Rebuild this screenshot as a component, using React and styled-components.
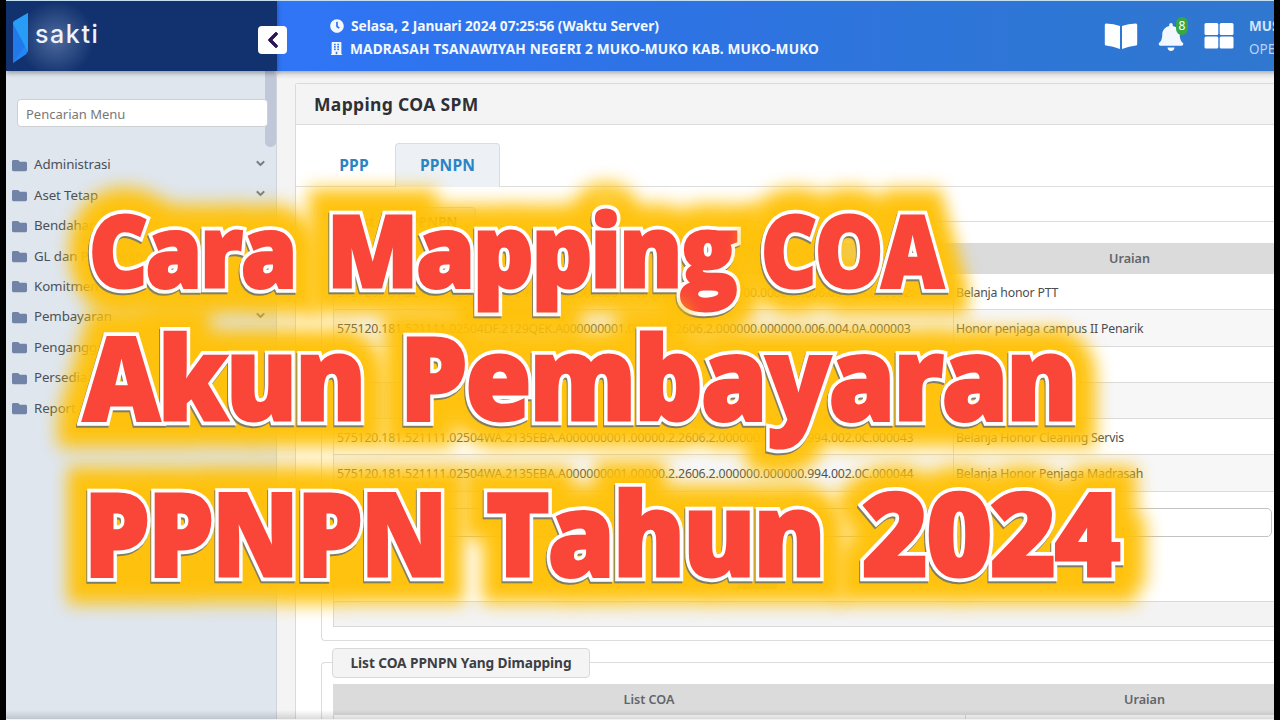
import React, { useLayoutEffect, useRef, useState } from "react";
import styled, { createGlobalStyle } from "styled-components";
import { FaClock, FaBuilding, FaBell, FaFolder, FaChevronDown, FaChevronLeft } from "react-icons/fa";

const Global = createGlobalStyle`
  * { box-sizing: border-box; }
  html, body { margin: 0; background: #000; overflow: hidden; }
  body { font-family: "Noto Sans", "Open Sans", sans-serif; color: #444; }
`;

const Frame = styled.div`
  position: relative;
  width: 1280px;
  height: 720px;
  padding: 0 6px;
  background: #000;
  overflow: hidden;
`;
const Screen = styled.div`
  display: flex;
  height: 719px;
  border-top: 1px solid #c4def2;
  background: #f4f4f4;
  overflow: hidden;
`;
const Sidebar = styled.aside`
  flex: none;
  width: 271px;
  display: flex;
  flex-direction: column;
  background: #dfe6ee;
  border-right: 1px solid #cfd4da;
`;
const Brand = styled.div`
  position: relative;
  z-index: 2;
  flex: none;
  display: flex;
  align-items: flex-start;
  width: 271px;
  height: 70px;
  padding: 11px 0 0 6px;
  background: radial-gradient(circle at 50px 38px, rgba(150, 175, 215, 0.45), rgba(150, 175, 215, 0) 38px), #12326f;
  box-shadow: 0 2px 5px rgba(0, 0, 0, 0.35);
`;
const BrandName = styled.span`
  margin: 4px 0 0 7px;
  font: 500 25px/36px Inter, sans-serif;
  letter-spacing: 1.6px;
  color: #eef3fb;
`;
const Toggle = styled.button`
  position: absolute;
  left: 252px;
  top: 25px;
  width: 29px;
  height: 28px;
  padding: 0;
  display: grid;
  place-items: center;
  border: 0;
  border-radius: 4px;
  background: #fff;
  color: #2d1557;
  svg { stroke: currentColor; stroke-width: 25px; }
`;
const SideBody = styled.div`
  position: relative;
  flex: 1;
  padding: 28px 9px 0 11px;
`;
const SideScroll = styled.div`
  position: absolute;
  right: 0;
  top: 0;
  width: 11px;
  height: 76px;
  border-radius: 0 0 5px 5px;
  background: #bfc7d9;
`;
const Search = styled.div`
  position: relative;
  width: 251px;
  height: 28px;
  padding-left: 8px;
  border: 1px solid #cdd0d3;
  border-radius: 4px;
  background: #fff;
  font-size: 13px;
  line-height: 28px;
  color: #777;
`;
const Menu = styled.ul`
  list-style: none;
  margin: 22px 0 0 -5px;
  padding: 0;
`;
const MenuItem = styled.li`
  display: flex;
  align-items: center;
  height: 30.45px;
  font-size: 13.3px;
  letter-spacing: -0.1px;
  color: #4b5058;
  svg:first-child { color: #7184a8; margin: 2px 7px 0 0; }
  span { flex: 1; }
  svg:last-child:not(:first-child) {
    color: #6d7681;
    margin: -2px 2px 0 0;
    stroke: currentColor;
    stroke-width: 40px;
  }
`;
const Main = styled.main`
  flex: 1;
  min-width: 0;
  display: flex;
  flex-direction: column;
`;
const TopBar = styled.header`
  flex: none;
  display: flex;
  align-items: flex-start;
  width: 997px;
  height: 70px;
  padding: 13px 0 0 53px;
  overflow: hidden;
  background: linear-gradient(90deg, #2f75f6, #2e73e4 40%, #2e76d6 75%, #3077cf);
  color: #f3f8ff;
`;
const BarShadow = styled.div`
  flex: none;
  height: 12px;
  background: linear-gradient(#b4b4b4, #e3e3e3 4px, #f4f4f4 8px);
`;
const Info = styled.div`
  flex: none;
  width: 774px;
`;
const InfoLine = styled.div`
  display: flex;
  align-items: center;
  gap: 7px;
  height: 23px;
  font-weight: 700;
  font-size: 13.7px;
  letter-spacing: ${(p) => p.$ls}px;
  white-space: nowrap;
`;
const Actions = styled.div`
  flex: none;
  display: flex;
  align-items: center;
  gap: 20px;
  height: 44px;
`;
const BellWrap = styled.div`
  position: relative;
  display: flex;
  width: 26px;
  margin-top: 1px;
`;
const Badge = styled.span`
  position: absolute;
  left: 18px;
  top: -6px;
  width: 12px;
  height: 18px;
  border-radius: 6px;
  background: #35a744;
  font: 12px/18px "Noto Sans", sans-serif;
  text-align: center;
  color: #fff;
`;
const User = styled.div`
  margin-left: -5px;
  margin-top: 4px;
  font-size: 13.5px;
  line-height: 23px;
  color: #b9d2f5;
  white-space: nowrap;
  b { display: block; color: #d3e3fa; font-weight: 700; }
`;
const Panel = styled.section`
  flex: 1;
  margin-left: 18px;
  border: 1px solid #dadada;
  border-width: 1px 0 0 1px;
  background: #fff;
  border-top-left-radius: 3px;
`;
const PanelTitle = styled.h1`
  margin: 0;
  height: 41px;
  padding-left: 18px;
  border-bottom: 1px solid #dcdcdc;
  background: #f4f4f4;
  font-size: 17.5px;
  font-weight: 700;
  letter-spacing: 0.35px;
  line-height: 41px;
  color: #2d3035;
`;
const Tabs = styled.nav`
  display: flex;
  height: 62px;
  padding: 18px 0 0 17px;
  border-bottom: 1px solid #dcdee0;
`;
const Tab = styled.div`
  width: ${(p) => p.$w}px;
  height: 44px;
  border: 1px solid ${(p) => (p.$on ? "#d9dde2" : "transparent")};
  border-bottom: 0;
  border-radius: 4px 4px 0 0;
  background: ${(p) => (p.$on ? "#edf1f5" : "transparent")};
  text-align: center;
  font-weight: 700;
  font-size: 15.6px;
  line-height: 43px;
  letter-spacing: 0.1px;
  color: #2a84c4;
`;
const Fieldset = styled.div`
  margin: ${(p) => p.$top}px 0 0 25px;
  height: ${(p) => p.$h}px;
  border: 1px solid #dcdcdc;
  border-right: 0;
  border-radius: 4px 0 0 4px;
  padding-left: 11px;
`;
const Legend = styled.div`
  width: ${(p) => p.$w}px;
  height: 30px;
  margin: -15px 0 6px -1px;
  border: 1px solid #d9d9d9;
  border-radius: 4px;
  background: #f4f4f4;
  text-align: center;
  font-weight: 700;
  font-size: 13.7px;
  line-height: 27px;
  letter-spacing: -0.08px;
  color: #3c3f44;
`;
const Row = styled.div`
  display: grid;
  grid-template-columns: ${(p) => p.$split || 620}px 1fr;
  height: 36.3px;
  border-bottom: 1px solid #dbdbdb;
  background: ${(p) => (p.$alt ? "#f7f7f8" : "#fff")};
`;
const HeadRow = styled(Row)`
  height: 31px;
  background: #dbdbdb;
`;
const Cell = styled.div`
  padding-left: ${(p) => p.$pad ?? 3}px;
  border-left: 1px solid #dddddd;
  font-size: 12.3px;
  letter-spacing: ${(p) => p.$ls || 0}px;
  line-height: 37px;
  white-space: nowrap;
  color: #4a4d52;
`;
const HeadCell = styled.div`
  padding-left: ${(p) => p.$pl || 0}px;
  text-align: center;
  font-weight: 600;
  font-size: 12.6px;
  line-height: 31px;
  color: #626569;
`;
const InputRow = styled.div`
  display: flex;
  gap: 6px;
  height: 109px;
  padding: 16px 2px 0 4px;
  border-left: 1px solid #dddddd;
`;
const Field = styled.div`
  flex: ${(p) => p.$flex};
  height: 29px;
  border: 1px solid #c3c3c3;
  border-radius: 5px;
  background: #fff;
`;
const Scroller = styled.div`
  width: 40px;
  height: 6px;
  margin: -18px 0 12px 404px;
  background: #aaa;
`;
const TableFoot = styled.div`
  height: 26px;
  border: 1px solid #d9d9d9;
  border-right: 0;
  background: #f3f3f3;
`;
const BottomShade = styled.div`
  position: absolute;
  left: 6px;
  right: 6px;
  bottom: 1px;
  height: 9px;
  background: linear-gradient(rgba(0, 0, 0, 0), rgba(0, 0, 0, 0.14));
`;
const BottomEdge = styled.div`
  height: 1px;
  background: #f2f2f2;
`;

const Headline = styled.div`
  position: absolute;
  inset: 0;
`;
const Word = styled.span`
  position: absolute;
  display: block;
  font-family: "Open Sans", "Noto Sans", sans-serif;
  font-weight: 800;
  font-size: ${(p) => p.$size}px;
  line-height: 1;
  letter-spacing: -2px;
  white-space: pre;
  left: ${(p) => p.$x}px;
  top: ${(p) => p.$base - p.$size * 0.888}px;
  transform-origin: 0 0;
  stroke-linejoin: round;
  &::before {
    content: attr(data-text);
    position: absolute;
    left: 0;
    top: 0;
    color: #ffc107;
    -webkit-text-stroke: 54px #ffc107;
    filter: blur(9px);
    opacity: 0.97;
  }
`;
const Face = styled.span`
  position: relative;
  display: block;
  color: #fff;
  -webkit-text-stroke: 10.5px #fff;
  paint-order: stroke fill;
  filter: drop-shadow(-0.5px 2px 0.6px #7f7d66);
  &::after {
    content: attr(data-text);
    position: absolute;
    left: 0;
    top: 0;
    color: #f94639;
    -webkit-text-stroke: 3px #f94639;
  }
`;

function FittedWord({ text, x, width, base, size }) {
  const ref = useRef(null);
  const [scale, setScale] = useState(1);
  useLayoutEffect(() => {
    setScale(width / ref.current.offsetWidth);
  }, [width]);
  return (
    <Word ref={ref} data-text={text} $x={x} $base={base} $size={size} style={{ transform: `scaleX(${scale})` }}>
      <Face data-text={text}>{text}</Face>
    </Word>
  );
}

const words = [
  { text: "Cara", x: 89, width: 206, base: 287, size: 100 },
  { text: "Mapping", x: 327, width: 409, base: 287, size: 100 },
  { text: "COA", x: 761, width: 181, base: 287, size: 100 },
  { text: "Akun", x: 83, width: 281, base: 420, size: 115 },
  { text: "Pembayaran", x: 400, width: 676, base: 420, size: 115 },
  { text: "PPNPN", x: 84, width: 362, base: 576, size: 115 },
  { text: "Tahun", x: 486, width: 338, base: 576, size: 115 },
  { text: "2024", x: 862, width: 257, base: 576, size: 115 },
];

const menu = [
  ["Administrasi", true], ["Aset Tetap", true], ["Bendahara"], ["GL dan Pelaporan"], ["Komitmen"],
  ["Pembayaran", true], ["Penganggaran"], ["Persediaan"], ["Report"],
];

const rows = [
  ["575120.181.521111.02504DF.2129QEK.A000000001.00000.2.2606.2.000000.000000.006.004.0A.000002", "Belanja honor PTT"],
  ["575120.181.521111.02504DF.2129QEK.A000000001.00000.2.2606.2.000000.000000.006.004.0A.000003", "Honor penjaga campus II Penarik"],
  ["", ""],
  ["", ""],
  ["575120.181.521111.02504WA.2135EBA.A000000001.00000.2.2606.2.000000.000000.994.002.0C.000043", "Belanja Honor Cleaning Servis"],
  ["575120.181.521111.02504WA.2135EBA.A000000001.00000.2.2606.2.000000.000000.994.002.0C.000044", "Belanja Honor Penjaga Madrasah"],
];

const Logo = () => (
  <svg width="16" height="52" viewBox="0 0 16 52">
    <path d="M1 12Q1 9 4 8L16 1v36q0 4-3 6L1 51z" fill="#2485f3" />
    <path d="M1 12Q1 9 4 8L16 1v39z" fill="#279df8" />
    <path d="M1 12 13 34 1 51z" fill="#2179ea" />
  </svg>
);
const BookIcon = () => (
  <svg width="34" height="28" viewBox="0 0 34 28" fill="#fff">
    <path d="M2 1.500Q10 1.500 16 4v23Q9 24 2 23.500Q.800 23.500.800 22V3Q.800 1.500 2 1.500z" />
    <path d="M32 1.500Q24 1.500 18 4v23q7-3 14-3.500 1.200 0 1.200-1.500V3q0-1.500-1.200-1.500z" />
  </svg>
);
const GridIcon = () => (
  <svg width="30" height="28" viewBox="0 0 30 28" fill="#fff">
    <rect x="0.500" y="1" width="13.800" height="12" rx="1.500" />
    <rect x="15.700" y="1" width="13.800" height="12" rx="1.500" />
    <rect x="0.500" y="14.500" width="13.800" height="12" rx="1.500" />
    <rect x="15.700" y="14.500" width="13.800" height="12" rx="1.500" />
  </svg>
);

export default function App() {
  return (
    <Frame>
      <Global />
      <Screen>
        <Sidebar>
          <Brand>
            <Logo />
            <BrandName>sakti</BrandName>
            <Toggle><FaChevronLeft size={18} /></Toggle>
          </Brand>
          <SideBody>
            <SideScroll />
            <Search>Pencarian Menu</Search>
            <Menu>
              {menu.map(([label, open]) => (
                <MenuItem key={label}>
                  <FaFolder size={15} />
                  <span>{label}</span>
                  {open && <FaChevronDown size={9} />}
                </MenuItem>
              ))}
            </Menu>
          </SideBody>
        </Sidebar>
        <Main>
          <TopBar>
            <Info>
              <InfoLine $ls={-0.02}><FaClock size={14} />Selasa, 2 Januari 2024 07:25:56 (Waktu Server)</InfoLine>
              <InfoLine $ls={0.15}><FaBuilding size={13} />MADRASAH TSANAWIYAH NEGERI 2 MUKO-MUKO KAB. MUKO-MUKO</InfoLine>
            </Info>
            <Actions>
              <BookIcon />
              <BellWrap><FaBell size={28} /><Badge>8</Badge></BellWrap>
              <GridIcon />
              <User><b>MUSTOFA</b>OPERATOR</User>
            </Actions>
          </TopBar>
          <BarShadow />
          <Panel>
            <PanelTitle>Mapping COA SPM</PanelTitle>
            <Tabs>
              <Tab $w={82}>PPP</Tab>
              <Tab $w={105} $on>PPNPN</Tab>
            </Tabs>
            <Fieldset $top={34} $h={420}>
              <Legend $w={144}>List COA PPNPN</Legend>
              <HeadRow>
                <HeadCell>List COA</HeadCell>
                <HeadCell $pl={32}>Uraian</HeadCell>
              </HeadRow>
              {rows.map(([coa, text], i) => (
                <Row key={i} $alt={i % 2 === 1}>
                  <Cell $ls={-0.17}>{coa}</Cell>
                  <Cell $ls={-0.2} $pad={2}>{text}</Cell>
                </Row>
              ))}
              <InputRow>
                <Field $flex="0 0 608px" />
                <Field $flex="1" />
              </InputRow>
              <Scroller />
              <TableFoot />
            </Fieldset>
            <Fieldset $top={21} $h={90}>
              <Legend $w={258}>List COA PPNPN Yang Dimapping</Legend>
              <HeadRow $split={632}>
                <HeadCell>List COA</HeadCell>
                <HeadCell $pl={50}>Uraian</HeadCell>
              </HeadRow>
              <Row $split={632}><Cell /><Cell /></Row>
            </Fieldset>
          </Panel>
        </Main>
      </Screen>
      <BottomShade />
      <BottomEdge />
      <Headline>
        {words.map((w) => <FittedWord key={w.text} {...w} />)}
      </Headline>
    </Frame>
  );
}
